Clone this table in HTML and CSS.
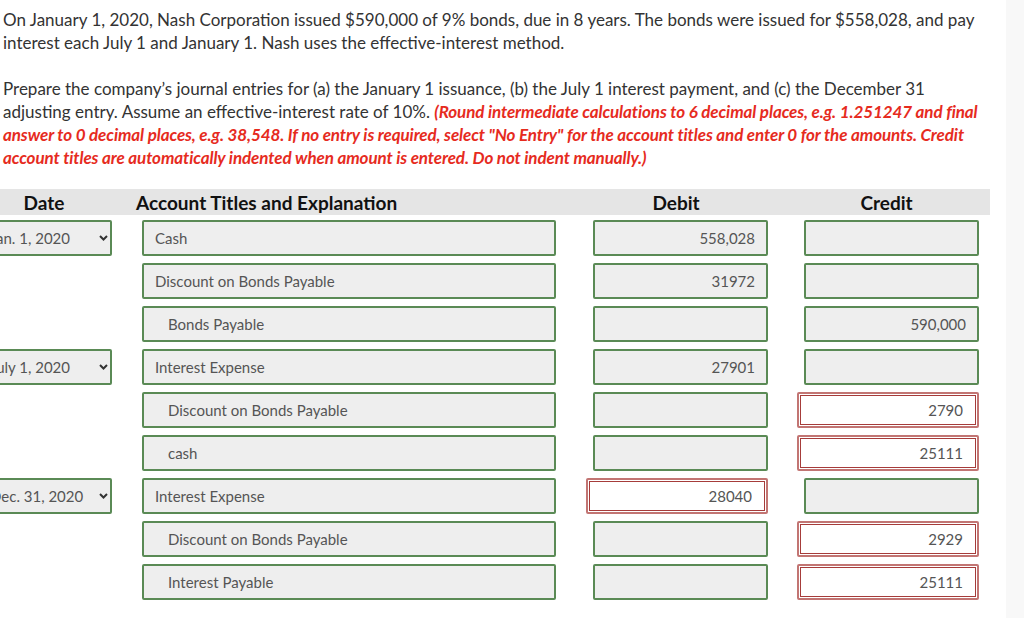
FILE: index.html
```html
<!DOCTYPE html>
<html lang="en">
<head>
<meta charset="UTF-8" />
<meta name="viewport" content="width=device-width, initial-scale=1.0">
<title>Journal Entries – Bonds</title>
<link rel="stylesheet" href="styles.css">
</head>
<body>
<div class="page">
  <main class="content">
    <p class="intro">On January 1, 2020, Nash Corporation issued $590,000 of 9% bonds, due in 8 years. The bonds were issued for $558,028, and pay interest each July 1 and January 1. Nash uses the effective-interest method.</p>
    <p class="intro">Prepare the company’s journal entries for (a) the January 1 issuance, (b) the July 1 interest payment, and (c) the December 31 adjusting entry. Assume an effective-interest rate of 10%. <em class="note">(Round intermediate calculations to 6 decimal places, e.g. 1.251247 and final answer to 0 decimal places, e.g. 38,548. If no entry is required, select "No Entry" for the account titles and enter 0 for the amounts. Credit account titles are automatically indented when amount is entered. Do not indent manually.)</em></p>

    <div class="journal">
      <div class="jhead">
        <div class="h-date">Date</div>
        <div class="h-acct">Account Titles and Explanation</div>
        <div class="h-debit">Debit</div>
        <div class="h-credit">Credit</div>
      </div>

      <!-- (a) issuance -->
      <div class="jrow">
        <div class="select"><span>Jan. 1, 2020</span><svg width="9" height="6" viewBox="0 0 9 6"><path d="M1 1l3.5 3.5L8 1" fill="none" stroke="#333" stroke-width="2"/></svg></div>
        <input class="field acct" value="Cash" readonly>
        <input class="field num debit" value="558,028" readonly>
        <input class="field num credit" value="" readonly>
      </div>
      <div class="jrow">
        <div class="nodate"></div>
        <input class="field acct" value="Discount on Bonds Payable" readonly>
        <input class="field num debit" value="31972" readonly>
        <input class="field num credit" value="" readonly>
      </div>
      <div class="jrow">
        <div class="nodate"></div>
        <input class="field acct indent" value="Bonds Payable" readonly>
        <input class="field num debit" value="" readonly>
        <input class="field num credit" value="590,000" readonly>
      </div>

      <!-- (b) interest payment -->
      <div class="jrow">
        <div class="select"><span>July 1, 2020</span><svg width="9" height="6" viewBox="0 0 9 6"><path d="M1 1l3.5 3.5L8 1" fill="none" stroke="#333" stroke-width="2"/></svg></div>
        <input class="field acct" value="Interest Expense" readonly>
        <input class="field num debit" value="27901" readonly>
        <input class="field num credit" value="" readonly>
      </div>
      <div class="jrow">
        <div class="nodate"></div>
        <input class="field acct indent" value="Discount on Bonds Payable" readonly>
        <input class="field num debit" value="" readonly>
        <div class="err credit"><input class="field num" value="2790" readonly></div>
      </div>
      <div class="jrow">
        <div class="nodate"></div>
        <input class="field acct indent" value="cash" readonly>
        <input class="field num debit" value="" readonly>
        <div class="err credit"><input class="field num" value="25111" readonly></div>
      </div>

      <!-- (c) adjusting entry -->
      <div class="jrow">
        <div class="select"><span>Dec. 31, 2020</span><svg width="9" height="6" viewBox="0 0 9 6"><path d="M1 1l3.5 3.5L8 1" fill="none" stroke="#333" stroke-width="2"/></svg></div>
        <input class="field acct" value="Interest Expense" readonly>
        <div class="err debit"><input class="field num" value="28040" readonly></div>
        <input class="field num credit" value="" readonly>
      </div>
      <div class="jrow">
        <div class="nodate"></div>
        <input class="field acct indent" value="Discount on Bonds Payable" readonly>
        <input class="field num debit" value="" readonly>
        <div class="err credit"><input class="field num" value="2929" readonly></div>
      </div>
      <div class="jrow">
        <div class="nodate"></div>
        <input class="field acct indent" value="Interest Payable" readonly>
        <input class="field num debit" value="" readonly>
        <div class="err credit"><input class="field num" value="25111" readonly></div>
      </div>
    </div>
  </main>
  <aside class="gutter"></aside>
</div>
</body>
</html>
```

FILE: styles.css
```css
:root{
  --text:#333;
  --note:#e62b1e;
  --field-bg:#eee;
  --field-border:#5a8a55;
  --err-outer:#c27573;
  --err-inner:#a63c3a;
}
*,*::before,*::after{box-sizing:border-box;margin:0;padding:0}
body{
  background:#fff;
  font-family:Lato,'Open Sans',sans-serif;
  color:var(--text);
  overflow:hidden;
}

.page{display:flex;min-height:100vh}
.content{width:1006px;padding:8px 13px 0 3px;overflow:hidden}
.gutter{flex:1;background:#f8f8f8}

/* TEXTO */
.intro{font-size:17px;line-height:23px;margin-bottom:23px}
.note{color:var(--note);font-weight:700;font-style:italic;letter-spacing:-.1px}

/* TABLA DE ASIENTOS */
.journal{margin-left:-23px;margin-top:-3px}
.jhead{
  display:flex;align-items:center;
  width:1010px;height:26px;
  background:#e5e5e5;
  font-weight:700;font-size:19px;color:#111;
  margin-bottom:5px;
}
.h-date{width:132px;padding-right:4px;text-align:center}
.h-acct{width:476px;padding-left:24px}
.h-debit{width:176px;text-align:center}
.h-credit{width:175px;margin-left:35px;text-align:center}

.jrow{display:flex;height:36px;margin-bottom:7px}
.select,.nodate{width:132px;flex:none}
.select{
  display:flex;align-items:center;justify-content:space-between;
  padding:0 2px 0 8px;
  background:var(--field-bg);
  border:2px solid var(--field-border);
  border-radius:2px;
  font-size:15px;color:#555;
}

.field{
  height:36px;
  font-family:inherit;font-size:15px;color:#555;
  background:var(--field-bg);
  border:2px solid var(--field-border);
  border-radius:2px;
  padding:0 11px;
  outline:none;
}
.acct{width:414px;margin-left:30px}
.acct.indent{padding-left:24px}
.num{text-align:right;width:175px}
.debit{margin-left:37px}
.credit{margin-left:36px}

/* CAMPOS CON ERROR */
.err{
  width:182px;height:36px;flex:none;
  border:2px solid var(--err-outer);
  border-radius:2px;
  padding:1px;
  background:#fff;
}
.err.debit{margin-left:30px}
.err.credit{margin-left:29px}
.err .field{
  width:100%;height:100%;
  background:#fff;
  border:1px solid var(--err-inner);
  border-radius:0;
  padding:0 12px;
}
```
